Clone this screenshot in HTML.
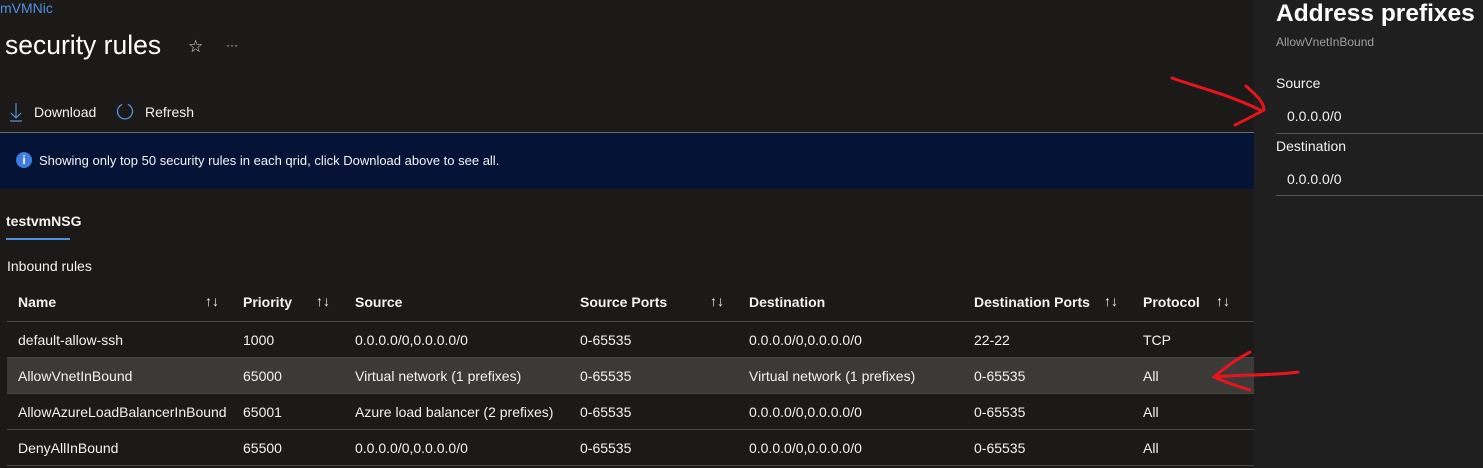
<!DOCTYPE html>
<html><head><style>
*{margin:0;padding:0;box-sizing:border-box}
body{width:1483px;height:468px;background:#1b1a19;font-family:"Liberation Sans",sans-serif;color:#f3f2f1;position:relative;overflow:hidden;font-size:14px}
.a{position:absolute;white-space:nowrap}
.panel{position:absolute;left:1254px;top:0;width:229px;height:468px;background:#1f1f1f}
.row{position:absolute;left:7px;width:1247px;height:36px;border-bottom:1px solid #484644}
.row span{position:absolute;top:10px;font-size:14px;color:#f3f2f1}
.hd span{font-weight:bold}
.s{color:#c8c6c4;font-size:14px;font-weight:normal!important;top:9px!important}
</style></head><body>
<div class="a" style="left:0;top:0;font-size:14px;color:#4f8fdc">mVMNic</div>
<div class="a" style="left:5px;top:30px;font-size:26.5px;color:#fff">security rules</div>
<div class="a" style="left:188px;top:37px;font-size:17px;color:#ddd">☆</div>
<div class="a" style="left:226px;top:38px;font-size:12px;color:#ccc">···</div>
<svg class="a" style="left:9px;top:102px" width="14" height="20"><path d="M7 1V16M2 11L7 16L12 11M1 19H13" stroke="#4f8fdc" fill="none" stroke-width="1.2"/></svg>
<div class="a" style="left:34px;top:104px;font-size:14px">Download</div>
<svg class="a" style="left:116px;top:102px" width="18" height="18"><path d="M6 2.5A7.5 7.5 0 1 0 12 2.5" stroke="#4f8fdc" fill="none" stroke-width="1.3"/></svg>
<div class="a" style="left:145px;top:104px;font-size:14px">Refresh</div>
<div class="a" style="left:0;top:132px;width:1254px;height:1px;background:#6b6a69"></div>
<div class="a" style="left:0;top:133px;width:1254px;height:56px;background:#051436"></div>
<div class="a" style="left:16px;top:152px;width:16px;height:16px;border-radius:50%;background:#3f7ce0;color:#fff;font-size:12px;font-weight:bold;text-align:center;line-height:16px">i</div>
<div class="a" style="left:39px;top:153px;font-size:13px">Showing only top 50 security rules in each qrid, click Download above to see all.</div>
<div class="a" style="left:6px;top:213px;font-size:14px;font-weight:bold">testvmNSG</div>
<div class="a" style="left:6px;top:238px;width:64px;height:2px;background:#4f8fdc"></div>
<div class="a" style="left:7px;top:258px;font-size:14px">Inbound rules</div>
<div class="row hd" style="top:284px;height:38px"><span style="left:11px">Name</span><span class="s" style="left:198px">↑↓</span><span style="left:236px">Priority</span><span class="s" style="left:309px">↑↓</span><span style="left:348px">Source</span><span style="left:573px">Source Ports</span><span class="s" style="left:703px">↑↓</span><span style="left:742px">Destination</span><span style="left:967px">Destination Ports</span><span class="s" style="left:1097px">↑↓</span><span style="left:1136px">Protocol</span><span class="s" style="left:1209px">↑↓</span></div>
<div class="row" style="top:322px"><span style="left:11px">default-allow-ssh</span><span style="left:236px">1000</span><span style="left:348px">0.0.0.0/0,0.0.0.0/0</span><span style="left:573px">0-65535</span><span style="left:742px">0.0.0.0/0,0.0.0.0/0</span><span style="left:967px">22-22</span><span style="left:1136px">TCP</span></div>
<div class="row" style="top:358px;background:#3b3a39"><span style="left:11px">AllowVnetInBound</span><span style="left:236px">65000</span><span style="left:348px">Virtual network (1 prefixes)</span><span style="left:573px">0-65535</span><span style="left:742px">Virtual network (1 prefixes)</span><span style="left:967px">0-65535</span><span style="left:1136px">All</span></div>
<div class="row" style="top:394px"><span style="left:11px">AllowAzureLoadBalancerInBound</span><span style="left:236px">65001</span><span style="left:348px">Azure load balancer (2 prefixes)</span><span style="left:573px">0-65535</span><span style="left:742px">0.0.0.0/0,0.0.0.0/0</span><span style="left:967px">0-65535</span><span style="left:1136px">All</span></div>
<div class="row" style="top:430px"><span style="left:11px">DenyAllInBound</span><span style="left:236px">65500</span><span style="left:348px">0.0.0.0/0,0.0.0.0/0</span><span style="left:573px">0-65535</span><span style="left:742px">0.0.0.0/0,0.0.0.0/0</span><span style="left:967px">0-65535</span><span style="left:1136px">All</span></div>
<div class="panel">
<div class="a" style="left:22px;top:0;font-size:24.5px;font-weight:bold;color:#fff">Address prefixes</div>
<div class="a" style="left:22px;top:35px;font-size:12px;color:#a19f9d">AllowVnetInBound</div>
<div class="a" style="left:22px;top:75px;font-size:14px">Source</div>
<div class="a" style="left:33px;top:108px;font-size:14px">0.0.0.0/0</div>
<div class="a" style="left:22px;top:133px;width:207px;height:1px;background:#555"></div>
<div class="a" style="left:22px;top:138px;font-size:14px">Destination</div>
<div class="a" style="left:33px;top:171px;font-size:14px">0.0.0.0/0</div>
<div class="a" style="left:22px;top:195px;width:207px;height:1px;background:#555"></div>
</div>
<svg class="a" style="left:0;top:0" width="1483" height="468">
<path d="M1172 78C1200 88 1230 95 1260 110M1246 86C1256 95 1264 102 1264 110C1255 115 1245 120 1235 125" stroke="#e8141c" stroke-width="3" fill="none" stroke-linecap="round"/>
<path d="M1298 372C1270 376 1245 374 1214 377M1250 352C1235 360 1222 370 1214 377C1225 382 1240 387 1250 390" stroke="#e8141c" stroke-width="3" fill="none" stroke-linecap="round"/>
</svg>
</body></html>
